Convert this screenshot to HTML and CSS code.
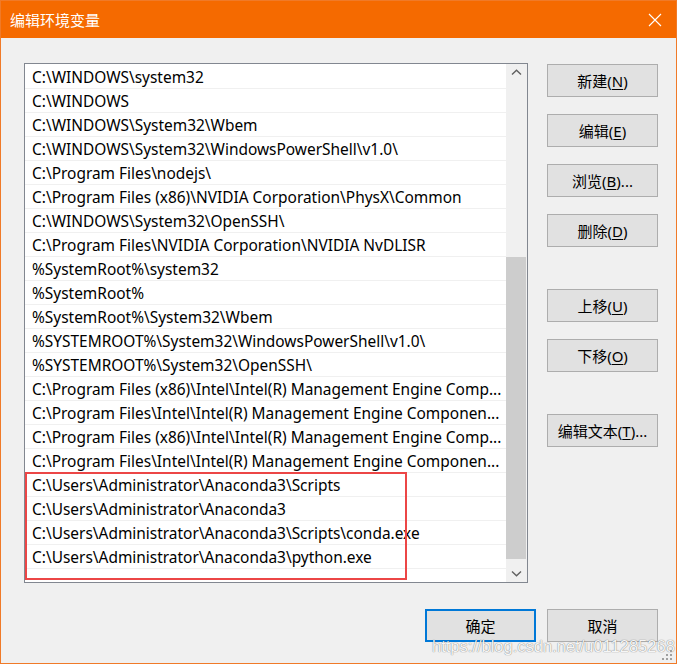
FILE: index.html
```
<!DOCTYPE html>
<html>
<head>
<meta charset="utf-8">
<link rel="stylesheet" href="styles.css">
</head>
<body>
<div class="window">
  <div class="titlebar">
    <span class="title">编辑环境变量</span>
    <svg class="close" width="14" height="14" viewBox="0 0 14 14"><path d="M1 1 L13 13 M13 1 L1 13" stroke="#fff" stroke-width="1.1" fill="none"/></svg>
  </div>
  <div class="content">
    <div class="main">
      <div class="list">
        <div class="rows">
          <div class="row">C:\WINDOWS\system32</div>
          <div class="row">C:\WINDOWS</div>
          <div class="row">C:\WINDOWS\System32\Wbem</div>
          <div class="row">C:\WINDOWS\System32\WindowsPowerShell\v1.0\</div>
          <div class="row">C:\Program Files\nodejs\</div>
          <div class="row">C:\Program Files (x86)\NVIDIA Corporation\PhysX\Common</div>
          <div class="row">C:\WINDOWS\System32\OpenSSH\</div>
          <div class="row">C:\Program Files\NVIDIA Corporation\NVIDIA NvDLISR</div>
          <div class="row">%SystemRoot%\system32</div>
          <div class="row">%SystemRoot%</div>
          <div class="row">%SystemRoot%\System32\Wbem</div>
          <div class="row">%SYSTEMROOT%\System32\WindowsPowerShell\v1.0\</div>
          <div class="row">%SYSTEMROOT%\System32\OpenSSH\</div>
          <div class="row">C:\Program Files (x86)\Intel\Intel(R) Management Engine Comp...</div>
          <div class="row">C:\Program Files\Intel\Intel(R) Management Engine Componen...</div>
          <div class="row">C:\Program Files (x86)\Intel\Intel(R) Management Engine Comp...</div>
          <div class="row">C:\Program Files\Intel\Intel(R) Management Engine Componen...</div>
          <div class="row">C:\Users\Administrator\Anaconda3\Scripts</div>
          <div class="row">C:\Users\Administrator\Anaconda3</div>
          <div class="row">C:\Users\Administrator\Anaconda3\Scripts\conda.exe</div>
          <div class="row">C:\Users\Administrator\Anaconda3\python.exe</div>
          <div class="row"></div>
          <div class="highlight"></div>
        </div>
        <div class="scrollbar">
          <div class="arrow"><svg width="11" height="7" viewBox="0 0 11 7"><path d="M1 5.5 L5.5 1.2 L10 5.5" stroke="#606060" stroke-width="1.4" fill="none"/></svg></div>
          <div class="track"><div class="thumb"></div></div>
          <div class="arrow"><svg width="11" height="7" viewBox="0 0 11 7"><path d="M1 1.5 L5.5 5.8 L10 1.5" stroke="#606060" stroke-width="1.4" fill="none"/></svg></div>
        </div>
      </div>
      <div class="side">
        <div class="btn">新建(<u>N</u>)</div>
        <div class="btn gap-s">编辑(<u>E</u>)</div>
        <div class="btn gap-s">浏览(<u>B</u>)...</div>
        <div class="btn gap-s">删除(<u>D</u>)</div>
        <div class="btn gap-l">上移(<u>U</u>)</div>
        <div class="btn gap-s">下移(<u>O</u>)</div>
        <div class="btn gap-l">编辑文本(<u>T</u>)...</div>
      </div>
    </div>
    <div class="footer">
      <div class="btn default">确定</div>
      <div class="btn">取消</div>
    </div>
  </div>
  <div class="watermark">https://blog.csdn.net/u011285268</div>
  <svg class="grip" width="10" height="10" viewBox="0 0 10 10">
    <rect x="8" y="0" width="2" height="2" fill="#a0a0a0"/>
    <rect x="4" y="4" width="2" height="2" fill="#a0a0a0"/>
    <rect x="8" y="4" width="2" height="2" fill="#a0a0a0"/>
    <rect x="0" y="8" width="2" height="2" fill="#a0a0a0"/>
    <rect x="4" y="8" width="2" height="2" fill="#a0a0a0"/>
    <rect x="8" y="8" width="2" height="2" fill="#a0a0a0"/>
  </svg>
</div>
</body>
</html>
```
FILE: styles.css
```
* { box-sizing: border-box; }
html, body { margin: 0; padding: 0; }
body {
  width: 677px;
  height: 664px;
  overflow: hidden;
  font-family: "Noto Sans", "Noto Sans CJK SC", sans-serif;
  font-size: 15px;
  color: #000;
}
.window {
  position: relative;
  width: 677px;
  height: 664px;
  border: 1px solid #f07a28;
  background: #f0f0f0;
  display: flex;
  flex-direction: column;
}
.titlebar {
  height: 37px;
  background: #f56a00;
  display: flex;
  align-items: center;
  justify-content: space-between;
  padding: 0 14px 0 9px;
}
.title {
  color: #fff;
  font-family: "Noto Sans CJK SC", sans-serif;
  font-size: 15px;
  line-height: 37px;
}
.close { display: block; }
.content {
  padding: 25px 18px 0 23px;
}
.main {
  display: flex;
  align-items: flex-start;
}
.list {
  width: 504px;
  height: 520px;
  border: 1px solid #828790;
  background: #fff;
  display: flex;
  overflow: hidden;
}
.rows {
  position: relative;
  width: 481px;
  padding-top: 1px;
  overflow: hidden;
}
.row {
  height: 24px;
  line-height: 24px;
  border-bottom: 1px solid #f0f0f0;
  padding-left: 7px;
  white-space: nowrap;
  overflow: hidden;
  font-size: 15.45px;
}
.highlight {
  position: absolute;
  left: 0;
  top: 408px;
  width: 382px;
  height: 108px;
  border: 2px solid #ec4646;
}
.scrollbar {
  width: 21px;
  background: #f0f0f0;
  display: flex;
  flex-direction: column;
}
.arrow {
  height: 17px;
  display: flex;
  align-items: center;
  justify-content: center;
}
.track {
  flex: 1;
}
.thumb {
  margin-top: 176px;
  height: 302px;
  width: 20px;
  background: #cdcdcd;
}
.side {
  margin-left: 19px;
  padding-top: 1px;
  display: flex;
  flex-direction: column;
}
.btn {
  width: 111px;
  height: 33px;
  background: #e1e1e1;
  border: 1px solid #adadad;
  display: flex;
  align-items: center;
  justify-content: center;
  font-family: "Noto Sans", "Noto Sans CJK SC", sans-serif;
  font-size: 15px;
  white-space: nowrap;
}
.btn u { text-underline-offset: 2px; }
.gap-s { margin-top: 17px; }
.gap-l { margin-top: 42px; }
.footer {
  margin-top: 26px;
  display: flex;
  justify-content: flex-end;
  gap: 11px;
}
.btn.default {
  border: 2px solid #0078d7;
}
.watermark {
  position: absolute;
  left: 431px;
  top: 636px;
  font-family: "Liberation Sans", sans-serif;
  font-size: 16.5px;
  color: rgba(255, 255, 255, 0.95);
  text-shadow: 0 0 1px rgba(0, 0, 0, 0.45), 0 0 1px rgba(0, 0, 0, 0.25);
}
.grip {
  position: absolute;
  right: 4px;
  bottom: 3px;
}
```
